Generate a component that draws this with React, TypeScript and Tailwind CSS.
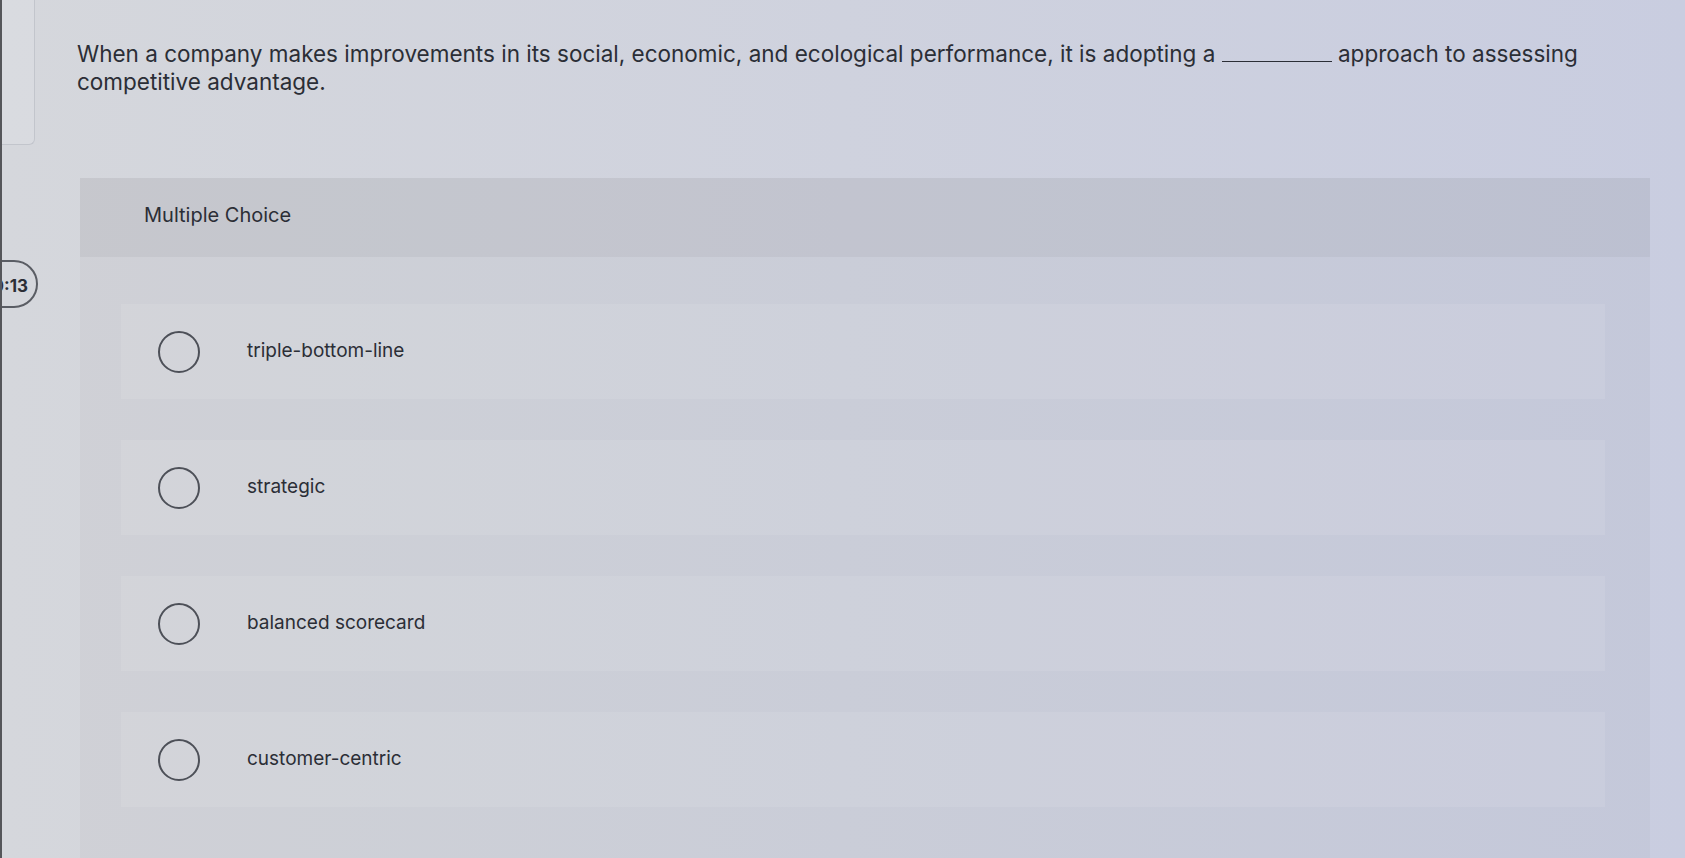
const options = ["triple-bottom-line", "strategic", "balanced scorecard", "customer-centric"];

function Radio() {
  return <div className="h-[42px] w-[42px] shrink-0 rounded-full border-2 border-[#4d5058]" />;
}

export default function App() {
  return (
    <div
      className="flex h-[858px] w-[1685px] overflow-hidden border-l-2 border-[#55565a] bg-linear-to-r from-[#d5d7dc] via-[#cfd2de] to-[#c9cde0] text-[#2b2e36]"
      style={{ fontFamily: "Inter, 'Liberation Sans', sans-serif" }}
    >
      {/* left rail */}
      <div className="w-[75px] shrink-0">
        <div className="h-[145px] w-[33px] rounded-br-md border-r border-b border-[#c2c5cc] bg-white/10" />
        <div className="mt-[115px] w-[36px] overflow-hidden">
          <div className="-ml-[29px] flex h-[48px] w-[65px] items-center justify-end rounded-full border-2 border-[#5a5d64] pr-[8px] pt-[5px] text-[17px] font-bold">
            0:13
          </div>
        </div>
      </div>

      {/* main */}
      <div className="flex-1">
        <p className="w-[1515px] pt-[40px] text-[22.5px] leading-[28px]">
          When a company makes improvements in its social, economic, and ecological performance, it is adopting a{" "}
          <span className="inline-block h-[18px] w-[110px] border-b border-[#2b2e36] align-baseline" />{" "}
          approach to assessing competitive advantage.
        </p>

        <div className="ml-[3px] mt-[82px] h-[700px] w-[1570px] bg-black/[0.025]">
          <div className="flex h-[79px] items-center bg-black/[0.04] pb-[5px] pl-[64px] text-[20px]">Multiple Choice</div>
          <div className="flex flex-col gap-[41px] pl-[41px] pt-[47px]">
            {options.map((o) => (
              <div key={o} className="flex h-[95px] w-[1484px] items-center bg-white/[0.09] pl-[37px]">
                <Radio />
                <span className="ml-[47px] text-[19px]">{o}</span>
              </div>
            ))}
          </div>
        </div>
      </div>
    </div>
  );
}
